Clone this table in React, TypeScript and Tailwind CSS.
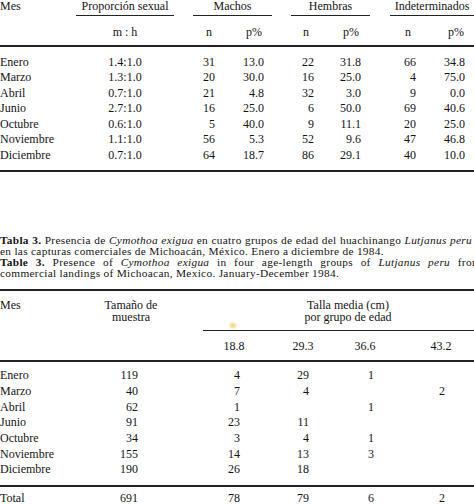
const serif = { fontFamily: '"Liberation Serif", "Times New Roman", serif' };

const top = [
  ["Enero", "1.4:1.0", "31", "13.0", "22", "31.8", "66", "34.8"],
  ["Marzo", "1.3:1.0", "20", "30.0", "16", "25.0", "4", "75.0"],
  ["Abril", "0.7:1.0", "21", "4.8", "32", "3.0", "9", "0.0"],
  ["Junio", "2.7:1.0", "16", "25.0", "6", "50.0", "69", "40.6"],
  ["Octubre", "0.6:1.0", "5", "40.0", "9", "11.1", "20", "25.0"],
  ["Noviembre", "1.1:1.0", "56", "5.3", "52", "9.6", "47", "46.8"],
  ["Diciembre", "0.7:1.0", "64", "18.7", "86", "29.1", "40", "10.0"],
];

const bottom = [
  ["Enero", "119", "4", "29", "1", ""],
  ["Marzo", "40", "7", "4", "", "2"],
  ["Abril", "62", "1", "", "1", ""],
  ["Junio", "91", "23", "11", "", ""],
  ["Octubre", "34", "3", "4", "1", ""],
  ["Noviembre", "155", "14", "13", "3", ""],
  ["Diciembre", "190", "26", "18", "", ""],
];

function TopRow({ r }: { r: string[] }) {
  return (
    <div className="flex leading-[15.5px]">
      <div className="w-[76px] shrink-0">{r[0]}</div>
      <div className="w-[98px] shrink-0 text-center">{r[1]}</div>
      <div className="w-[41px] shrink-0 text-right">{r[2]}</div>
      <div className="w-[49px] shrink-0 text-right">{r[3]}</div>
      <div className="w-[50px] shrink-0 text-right">{r[4]}</div>
      <div className="w-[47px] shrink-0 text-right">{r[5]}</div>
      <div className="w-[55px] shrink-0 text-right">{r[6]}</div>
      <div className="w-[49px] shrink-0 text-right">{r[7]}</div>
    </div>
  );
}

function BottomRow({ r, last }: { r: string[]; last?: boolean }) {
  return (
    <div className={last ? "flex leading-[12px]" : "flex leading-[15.67px]"}>
      <div className="w-[100px] shrink-0">{r[0]}</div>
      <div className="w-[38px] shrink-0 text-right">{r[1]}</div>
      <div className="w-[102px] shrink-0 text-right">{r[2]}</div>
      <div className="w-[69px] shrink-0 text-right">{r[3]}</div>
      <div className="w-[65px] shrink-0 text-right">{r[4]}</div>
      <div className="w-[71px] shrink-0 text-right">{r[5]}</div>
    </div>
  );
}

export default function App() {
  return (
    <div
      className="relative h-[504px] w-[474px] overflow-hidden bg-white text-[12px] text-[#141414]"
      style={serif}
    >
      {/* Tabla 2: proporción sexual */}
      <div className="border-b-2 border-[#222] pb-[5px]">
        <div className="flex leading-[12px]">
          <div className="w-[76px] shrink-0">Mes</div>
          <div className="w-[98px] shrink-0 border-b-[1.5px] border-[#222] pb-[3px] text-center">Proporción sexual</div>
          <div className="w-[19px] shrink-0" />
          <div className="w-[79px] shrink-0 border-b-[1.5px] border-[#222] pb-[3px] text-center">Machos</div>
          <div className="w-[19px] shrink-0" />
          <div className="w-[79px] shrink-0 border-b-[1.5px] border-[#222] pb-[3px] text-center">Hembras</div>
          <div className="w-[20px] shrink-0" />
          <div className="flex-1 border-b-[1.5px] border-[#222] pb-[3px] text-center">Indeterminados</div>
        </div>
        <div className="mt-[9px] flex leading-[15px]">
          <div className="w-[76px] shrink-0" />
          <div className="w-[98px] shrink-0 text-center">m : h</div>
          <div className="w-[41px] shrink-0 pr-[3px] text-right">n</div>
          <div className="w-[49px] shrink-0 pr-[2px] text-right">p%</div>
          <div className="w-[50px] shrink-0 pr-[5px] text-right">n</div>
          <div className="w-[47px] shrink-0 pr-[2px] text-right">p%</div>
          <div className="w-[55px] shrink-0 pr-[5px] text-right">n</div>
          <div className="w-[49px] shrink-0 pr-[1px] text-right">p%</div>
        </div>
      </div>
      <div className="border-b-2 border-[#222] pt-[7.5px] pb-[6.5px]">
        {top.map((r) => (
          <TopRow key={r[0]} r={r} />
        ))}
      </div>

      {/* Leyenda */}
      <div className="mt-[63px] text-[11.33px] leading-[11.33px] tracking-[0.3px]">
        <div className="w-[472px] whitespace-nowrap text-justify [text-align-last:justify]">
          <b>Tabla 3.</b> Presencia de <i>Cymothoa exigua</i>  en cuatro grupos de edad del huachinango <i>Lutjanus peru</i>
        </div>
        <div>en las capturas comerciales de Michoacán, México. Enero a diciembre de 1984.</div>
        <div className="w-[481px] whitespace-nowrap text-justify [text-align-last:justify]">
          <b>Table 3.</b> Presence of <i>Cymothoa exigua</i> in four age-length groups of <i>Lutjanus peru</i> from
        </div>
        <div>commercial landings of Michoacan, Mexico. January-December 1984.</div>
      </div>

      {/* Tabla 3 */}
      <div className="mt-[9.5px] border-t-2 border-[#222]" />
      <div className="flex border-b-2 border-[#222] pt-[7.5px] pb-[6px] leading-[12.5px]">
        <div className="flex w-[203px] shrink-0">
          <div className="w-[96px] shrink-0">Mes</div>
          <div className="w-[70px] shrink-0 text-center">
            Tamaño de
            <br />
            muestra
          </div>
        </div>
        <div className="flex-1">
          <div className="border-b-[1.5px] border-[#222] pb-[6.5px] text-center">
            Talla media (cm)
            <br />
            por grupo de edad
          </div>
          <div className="mt-[7.5px] flex leading-[15px]">
            <div className="w-[62px] shrink-0 text-center">18.8</div>
            <div className="w-[76px] shrink-0 text-center">29.3</div>
            <div className="w-[48px] shrink-0 text-center">36.6</div>
            <div className="w-[104px] shrink-0 text-center">43.2</div>
          </div>
        </div>
      </div>
      <div className="border-b-2 border-[#222] pt-[6.5px] pb-[7px]">
        {bottom.map((r) => (
          <BottomRow key={r[0]} r={r} />
        ))}
      </div>
      <div className="pt-[5px]">
        <BottomRow r={["Total", "691", "78", "79", "6", "2"]} last />
      </div>

      {/* mancha amarilla del escaneo */}
      <span className="absolute left-[230px] top-[323px] h-[5px] w-[6px] rounded-full bg-[#f0c860] opacity-80 blur-[1px]" />
    </div>
  );
}
